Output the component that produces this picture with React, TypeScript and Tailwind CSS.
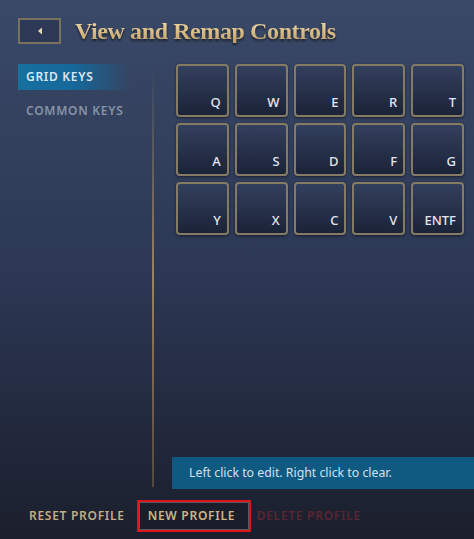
const rows = [
  ["Q", "W", "E", "R", "T"],
  ["A", "S", "D", "F", "G"],
  ["Y", "X", "C", "V", "ENTF"],
];

function KeyCap({ label }: { label: string }) {
  return (
    <div className="flex h-[53px] items-end justify-end rounded-[4px] border-2 border-[#857b64] bg-gradient-to-b from-[#33405d] to-[#1b2338] pb-[6px] pr-[6px] shadow-[0_1px_3px_rgba(0,0,0,0.5)]">
      <span className="text-[13px] font-medium leading-none text-[#e2e6ee]">
        {label}
      </span>
    </div>
  );
}

export default function App() {
  return (
    <div className="flex h-[539px] w-[474px] flex-col overflow-hidden bg-gradient-to-b from-[#3a4968] via-[#2c3855] to-[#1b1f2d] font-['Noto_Sans',sans-serif]">
      {/* Header */}
      <header className="flex h-[62px] shrink-0 items-center gap-[14px] pl-[18px]">
        <button className="flex h-[26px] w-[43px] items-center justify-center border-2 border-[#78715d] bg-[#2c3856]">
          <svg width="6" height="8" viewBox="0 0 6 8">
            <path d="M5 0.5 L1 4 L5 7.5 Z" fill="#e6d9b8" />
          </svg>
        </button>
        <h1 className="bg-gradient-to-b from-[#f0dcaa] to-[#c2a066] bg-clip-text font-['Liberation_Serif',serif] text-[24px] font-bold leading-none tracking-[-0.4px] text-transparent [filter:drop-shadow(0_2px_1px_rgba(0,0,0,0.55))]">
          View and Remap Controls
        </h1>
      </header>

      {/* Body */}
      <div className="flex flex-1">
        <nav className="flex w-[152px] shrink-0 flex-col pl-[18px] pt-[2px]">
          <div className="flex h-[26px] w-[112px] items-center bg-gradient-to-r from-[#1670a0] via-[#15689a] to-transparent pl-[8px] text-[12px] font-semibold tracking-[0.06em] text-[#dbe7f1]">
            GRID KEYS
          </div>
          <div className="mt-[8px] flex h-[26px] items-center pl-[8px] text-[12px] font-semibold tracking-[0.06em] text-[#8792a4]">
            COMMON KEYS
          </div>
        </nav>

        <div className="my-[6px] w-[2px] shrink-0 bg-gradient-to-b from-transparent via-[#9c8460] to-[#54493c]" />

        <main className="flex flex-1 flex-col">
          <div className="ml-[22px] mt-[2px] grid w-[288px] grid-cols-5 gap-x-[6px] gap-y-[6px]">
            {rows.flat().map((k) => (
              <KeyCap key={k} label={k} />
            ))}
          </div>
          <div className="ml-[18px] mt-auto mb-[4px] flex h-[32px] items-center bg-[#105a81] pl-[17px] text-[12.3px] text-[#d3e1ec]">
            Left click to edit. Right click to clear.
          </div>
        </main>
      </div>

      {/* Footer */}
      <footer className="flex h-[46px] shrink-0 items-center pl-[29px] text-[12px] font-semibold tracking-[0.06em]">
        <span className="text-[#c2ae84]">RESET PROFILE</span>
        <span className="ml-[12px] flex h-[32px] w-[114px] items-center border-2 border-[#e0141e] bg-[#1a1e2b] pl-[9px] text-[#cbb789] shadow-[inset_0_0_0_1px_#5a5a5a]">
          NEW PROFILE
        </span>
        <span className="ml-[6px] text-[#5a2532]">DELETE PROFILE</span>
      </footer>
    </div>
  );
}
